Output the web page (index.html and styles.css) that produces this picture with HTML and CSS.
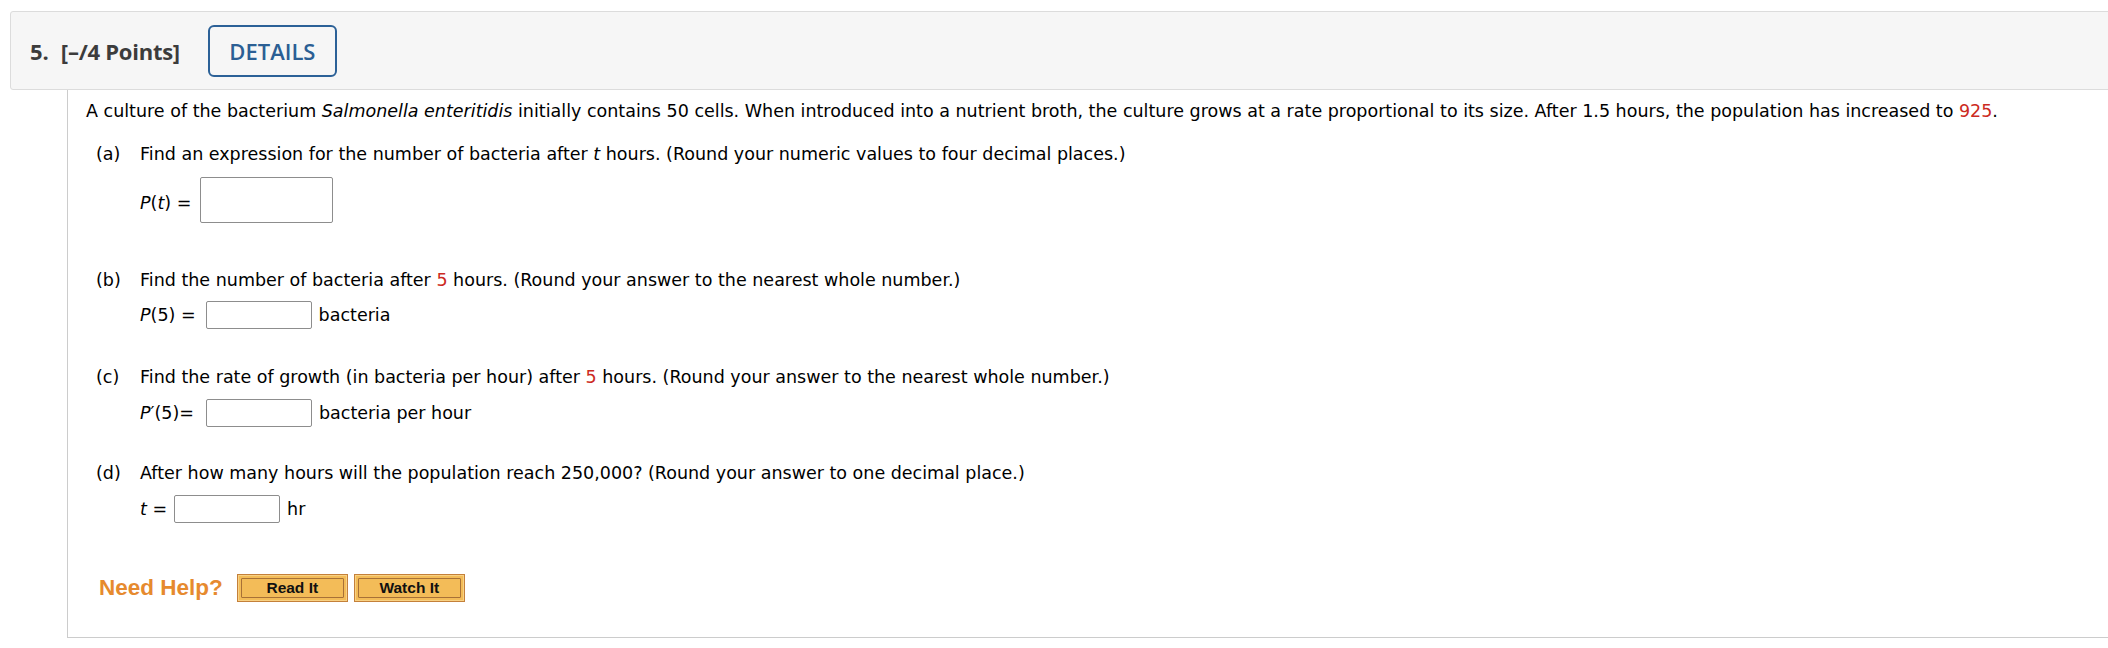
FILE: index.html
```html
<!DOCTYPE html>
<html lang="en">
<head>
<meta charset="utf-8">
<title>Question 5</title>
<link rel="stylesheet" href="styles.css">
</head>
<body>
<div class="question">
  <div class="qhead">
    <span class="qnum">5.</span>
    <span class="qpts">[–/4 Points]</span>
    <button class="details">DETAILS</button>
  </div>
  <div class="qbody">
    <p class="intro">A culture of the bacterium <i>Salmonella enteritidis</i> initially contains 50 cells. When introduced into a nutrient broth, the culture grows at a rate proportional to its size. After 1.5 hours, the population has increased to <span class="red">925</span>.</p>

    <div class="part part-a">
      <span class="plabel">(a)</span>
      <div class="pcontent">
        <div class="ptext">Find an expression for the number of bacteria after <i>t</i> hours. (Round your numeric values to four decimal places.)</div>
        <div class="answer big">
          <span class="alabel"><i>P</i>(<i>t</i>) =</span>
          <span class="box big-box"></span>
        </div>
      </div>
    </div>

    <div class="part part-b">
      <span class="plabel">(b)</span>
      <div class="pcontent">
        <div class="ptext">Find the number of bacteria after <span class="red">5</span> hours. (Round your answer to the nearest whole number.)</div>
        <div class="answer">
          <span class="alabel"><i>P</i>(5) =</span>
          <span class="box"></span>
          <span class="unit">bacteria</span>
        </div>
      </div>
    </div>

    <div class="part part-c">
      <span class="plabel">(c)</span>
      <div class="pcontent">
        <div class="ptext">Find the rate of growth (in bacteria per hour) after <span class="red">5</span> hours. (Round your answer to the nearest whole number.)</div>
        <div class="answer">
          <span class="alabel"><i>P</i>′(5)=</span>
          <span class="box"></span>
          <span class="unit">bacteria per hour</span>
        </div>
      </div>
    </div>

    <div class="part part-d">
      <span class="plabel">(d)</span>
      <div class="pcontent">
        <div class="ptext">After how many hours will the population reach 250,000? (Round your answer to one decimal place.)</div>
        <div class="answer">
          <span class="alabel"><i>t</i> =</span>
          <span class="box"></span>
          <span class="unit">hr</span>
        </div>
      </div>
    </div>

    <div class="help">
      <span class="needhelp">Need Help?</span>
      <span class="hbtn"><span class="hbtn-in">Read It</span></span>
      <span class="hbtn"><span class="hbtn-in">Watch It</span></span>
    </div>
  </div>
</div>
</body>
</html>
```
FILE: styles.css
```css
html, body {
  margin: 0;
  padding: 0;
  background: #ffffff;
}

body {
  width: 2108px;
  overflow: hidden;
}

.question {
  margin: 11px 0 0 10px;
  width: 2140px;
}

.qhead {
  display: flex;
  align-items: center;
  height: 77px;
  padding-left: 19px;
  background: #f6f6f6;
  border: 1px solid #dcdcdc;
  border-radius: 3px 0 0 3px;
  font-family: "Open Sans", "Liberation Sans", sans-serif;
  font-size: 22px;
  font-weight: 700;
  color: #3c3c3c;
}

.qnum {
  margin-right: 12px;
}

.qpts {
  letter-spacing: -0.25px;
  margin-right: 28px;
}

.details {
  box-sizing: border-box;
  height: 52px;
  width: 129px;
  padding: 0;
  background: #f6f6f6;
  border: 2px solid #2c6197;
  border-radius: 6px;
  font-family: "Open Sans", "Liberation Sans", sans-serif;
  font-size: 22px;
  font-weight: 600;
  color: #2b5f94;
}

.qbody {
  margin-left: 57px;
  border-left: 1px solid #cccccc;
  border-bottom: 1px solid #cccccc;
  padding: 10px 0 35px 18px;
  font-family: "DejaVu Sans", Verdana, sans-serif;
  font-size: 17.5px;
  line-height: 22px;
  color: #000000;
}

.intro {
  margin: 0 0 21px 0;
}

.red {
  color: #cc2a22;
}

.part {
  display: flex;
  margin-left: 10px;
}

.plabel {
  width: 44px;
  flex: none;
}

.pcontent {
  display: flex;
  flex-direction: column;
}

.answer {
  display: flex;
  align-items: center;
  margin-top: 10px;
}

.alabel {
  margin-right: 10px;
  white-space: nowrap;
}

.unit {
  margin-left: 7px;
}

.part-c .answer,
.part-d .answer {
  margin-top: 11px;
}

.part-c .alabel {
  margin-right: 12px;
}

.part-d .alabel {
  margin-right: 7px;
}

.answer.big {
  margin-top: 12px;
}

.answer.big .alabel {
  padding-top: 6px;
  margin-right: 9px;
}

.box {
  box-sizing: border-box;
  width: 106px;
  height: 28px;
  border: 1px solid #8d8d8d;
  border-radius: 2px;
  background: #ffffff;
}

.big-box {
  width: 133px;
  height: 46px;
}

.part-b {
  margin-top: 46px;
}

.part-c {
  margin-top: 37px;
}

.part-d {
  margin-top: 35px;
}

.help {
  display: flex;
  align-items: center;
  margin: 51px 0 0 13px;
  gap: 6px;
}

.needhelp {
  font-family: "Liberation Sans", Arial, sans-serif;
  font-weight: 700;
  font-size: 22.5px;
  color: #e68a2e;
  margin-right: 8px;
}

.hbtn {
  box-sizing: border-box;
  display: flex;
  width: 111px;
  height: 28px;
  padding: 3px;
  background: #f3bc58;
  border: 1px solid #c4803a;
  box-shadow: inset 0 0 0 1px #f8d184;
}

.hbtn-in {
  flex: 1;
  display: flex;
  align-items: center;
  justify-content: center;
  border: 1px solid #a87136;
  border-radius: 1px;
  background: #f3bc58;
  font-family: "Liberation Sans", Arial, sans-serif;
  font-weight: 700;
  font-size: 15.5px;
  color: #111111;
}
```
